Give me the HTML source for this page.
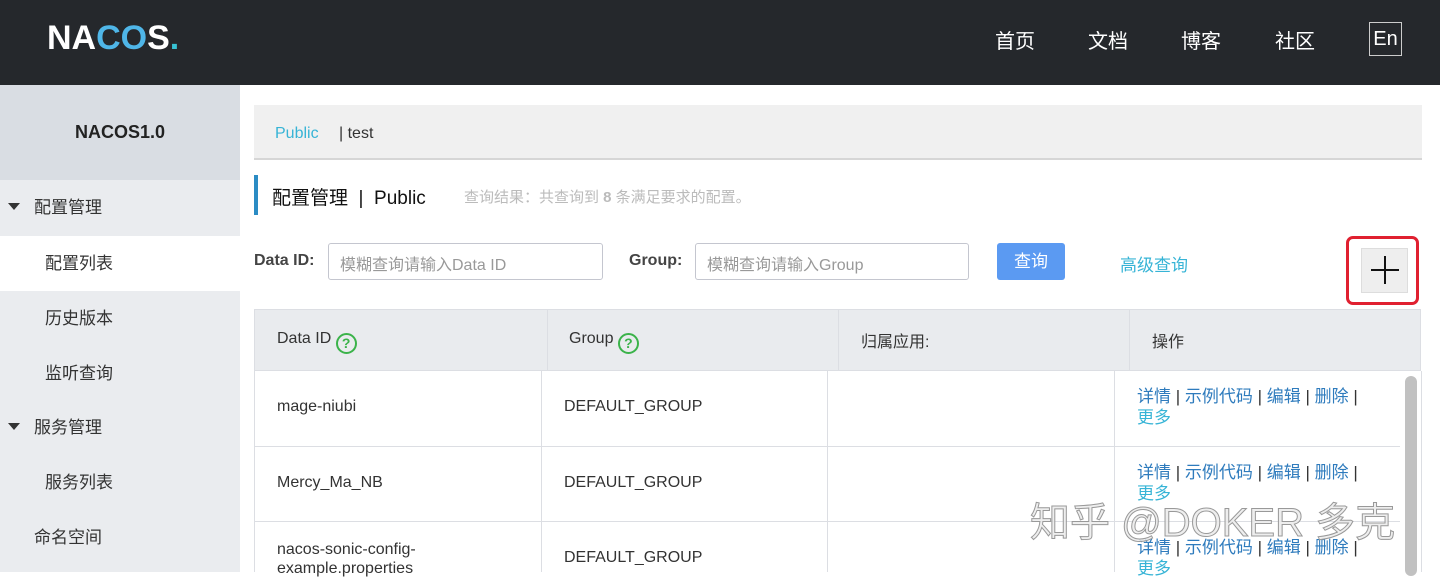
<!DOCTYPE html>
<html><head><meta charset="utf-8"><style>
*{margin:0;padding:0;box-sizing:border-box}
body{width:1440px;height:572px;overflow:hidden;background:#fff;font-family:"Liberation Sans","Noto Sans CJK SC",sans-serif;color:#333;position:relative}
.abs{position:absolute}
.hdr{left:0;top:0;width:1440px;height:85px;background:#25282c}
.nav{top:25px;font-size:20px;color:#fff}
.side{left:0;top:85px;width:240px;height:487px;background:#eaecef}
.mi{position:absolute;left:0;width:240px;height:55px;font-size:17px;line-height:55px}
.link{color:#2e7bbd}
.cell{position:absolute;font-size:16px}
.ops{font-size:17px}
</style></head><body>
<div class="abs hdr"></div>
<div class="abs" style="left:47px;top:19px;font-size:34px;font-weight:bold;color:#fff;letter-spacing:0px">NA<span style="color:#4fb6e8">CO</span>S<span style="color:#37c2d4">.</span></div>
<div class="abs nav" style="left:995px">首页</div>
<div class="abs nav" style="left:1088px">文档</div>
<div class="abs nav" style="left:1181px">博客</div>
<div class="abs nav" style="left:1275px">社区</div>
<div class="abs" style="left:1369px;top:22px;width:33px;height:34px;border:1px solid #ccc;color:#fff;font-size:20px;line-height:32px;text-align:center">En</div>

<div class="abs side"></div>
<div class="abs" style="left:0;top:85px;width:240px;height:95px;background:#d9dde3;text-align:center;line-height:95px;font-weight:bold;font-size:18px;color:#222">NACOS1.0</div>
<div class="mi" style="top:180px;padding-left:34px"><span class="abs" style="left:8px;top:23px;width:0;height:0;border-left:6px solid transparent;border-right:6px solid transparent;border-top:7px solid #333"></span>配置管理</div>
<div class="mi" style="top:236px;background:#fff;padding-left:45px">配置列表</div>
<div class="mi" style="top:291px;padding-left:45px">历史版本</div>
<div class="mi" style="top:346px;padding-left:45px">监听查询</div>
<div class="mi" style="top:400px;padding-left:34px"><span class="abs" style="left:8px;top:23px;width:0;height:0;border-left:6px solid transparent;border-right:6px solid transparent;border-top:7px solid #333"></span>服务管理</div>
<div class="mi" style="top:455px;padding-left:45px">服务列表</div>
<div class="mi" style="top:510px;padding-left:34px">命名空间</div>

<div class="abs" style="left:254px;top:105px;width:1168px;height:55px;background:#f0f0f0;border-bottom:2px solid #d6d6d6"></div>
<div class="abs" style="left:275px;top:125px;font-size:16px;color:#37b4d6">Public</div>
<div class="abs" style="left:339px;top:125px;font-size:16px;color:#333">| test</div>

<div class="abs" style="left:254px;top:175px;width:4px;height:40px;background:#2b8cc4"></div>
<div class="abs" style="left:272px;top:183px;font-size:19px;color:#111">配置管理 &nbsp;|&nbsp; Public</div>
<div class="abs" style="left:464px;top:186px;font-size:15px;color:#bbb">查询结果：共查询到 <b>8</b> 条满足要求的配置。</div>

<div class="abs" style="left:254px;top:252px;font-size:16px;font-weight:bold;color:#444">Data ID:</div>
<div class="abs" style="left:328px;top:243px;width:275px;height:37px;border:1px solid #c4c6cf;border-radius:3px;font-size:16px;color:#999;padding:7px 11px">模糊查询请输入Data ID</div>
<div class="abs" style="left:629px;top:252px;font-size:16px;font-weight:bold;color:#444">Group:</div>
<div class="abs" style="left:695px;top:243px;width:274px;height:37px;border:1px solid #c4c6cf;border-radius:3px;font-size:16px;color:#999;padding:7px 11px">模糊查询请输入Group</div>
<div class="abs" style="left:997px;top:243px;width:68px;height:37px;background:#5b9af2;border-radius:3px;color:#fff;font-size:17px;text-align:center;line-height:37px">查询</div>
<div class="abs" style="left:1120px;top:251px;font-size:17px;color:#37b4d6">高级查询</div>
<div class="abs" style="left:1346px;top:236px;width:73px;height:69px;border:3px solid #e02030;border-radius:7px"></div>
<div class="abs" style="left:1361px;top:248px;width:47px;height:45px;background:#eee;border:1px solid #ddd"></div>
<div class="abs" style="left:1371px;top:269px;width:28px;height:2px;background:#111"></div>
<div class="abs" style="left:1384px;top:256px;width:2px;height:28px;background:#111"></div>

<div class="abs" style="left:254px;top:309px;width:1167px;height:62px;background:#e9ebee;border:1px solid #dcdee3"></div>
<div class="abs" style="left:547px;top:309px;width:1px;height:62px;background:#dcdee3"></div>
<div class="abs" style="left:838px;top:309px;width:1px;height:62px;background:#dcdee3"></div>
<div class="abs" style="left:1129px;top:309px;width:1px;height:62px;background:#dcdee3"></div>
<div class="cell" style="left:277px;top:330px">Data ID <span style="display:inline-block;width:21px;height:21px;border:2px solid #3bb34a;border-radius:50%;color:#3bb34a;font-size:14px;line-height:17px;text-align:center;font-weight:bold;vertical-align:-5px">?</span></div>
<div class="cell" style="left:569px;top:330px">Group <span style="display:inline-block;width:21px;height:21px;border:2px solid #3bb34a;border-radius:50%;color:#3bb34a;font-size:14px;line-height:17px;text-align:center;font-weight:bold;vertical-align:-5px">?</span></div>
<div class="cell" style="left:861px;top:328px">归属应用:</div>
<div class="cell" style="left:1152px;top:328px">操作</div>

<div class="abs" style="left:254px;top:371px;width:1px;height:201px;background:#dcdee3"></div>
<div class="abs" style="left:541px;top:371px;width:1px;height:201px;background:#dcdee3"></div>
<div class="abs" style="left:827px;top:371px;width:1px;height:201px;background:#dcdee3"></div>
<div class="abs" style="left:1114px;top:371px;width:1px;height:201px;background:#dcdee3"></div>
<div class="abs" style="left:1421px;top:371px;width:1px;height:201px;background:#dcdee3"></div>
<div class="abs" style="left:254px;top:446px;width:1146px;height:1px;background:#dcdee3"></div>
<div class="abs" style="left:254px;top:521px;width:1146px;height:1px;background:#dcdee3"></div>
<div class="abs" style="left:1405px;top:376px;width:12px;height:200px;background:#c1c1c1;border-radius:6px"></div>

<div class="cell" style="left:277px;top:398px">mage-niubi</div>
<div class="cell" style="left:564px;top:398px">DEFAULT_GROUP</div>
<div class="cell" style="left:277px;top:474px">Mercy_Ma_NB</div>
<div class="cell" style="left:564px;top:474px">DEFAULT_GROUP</div>
<div class="cell" style="left:277px;top:540px;line-height:19px">nacos-sonic-config-<br>example.properties</div>
<div class="cell" style="left:564px;top:549px">DEFAULT_GROUP</div>

<div class="cell ops" style="left:1137px;top:386px;line-height:21px"><span class="link">详情</span> | <span class="link">示例代码</span> | <span class="link">编辑</span> | <span class="link">删除</span> |<br><span style="color:#37b4d6">更多</span></div>
<div class="cell ops" style="left:1137px;top:462px;line-height:21px"><span class="link">详情</span> | <span class="link">示例代码</span> | <span class="link">编辑</span> | <span class="link">删除</span> |<br><span style="color:#37b4d6">更多</span></div>
<div class="cell ops" style="left:1137px;top:537px;line-height:21px"><span class="link">详情</span> | <span class="link">示例代码</span> | <span class="link">编辑</span> | <span class="link">删除</span> |<br><span style="color:#37b4d6">更多</span></div>

<div class="abs" style="left:1030px;top:490px;font-size:40px;color:rgba(235,235,235,0.85);-webkit-text-stroke:1px #999;white-space:nowrap;letter-spacing:0px">知乎 @DOKER 多克</div>
</body></html>
